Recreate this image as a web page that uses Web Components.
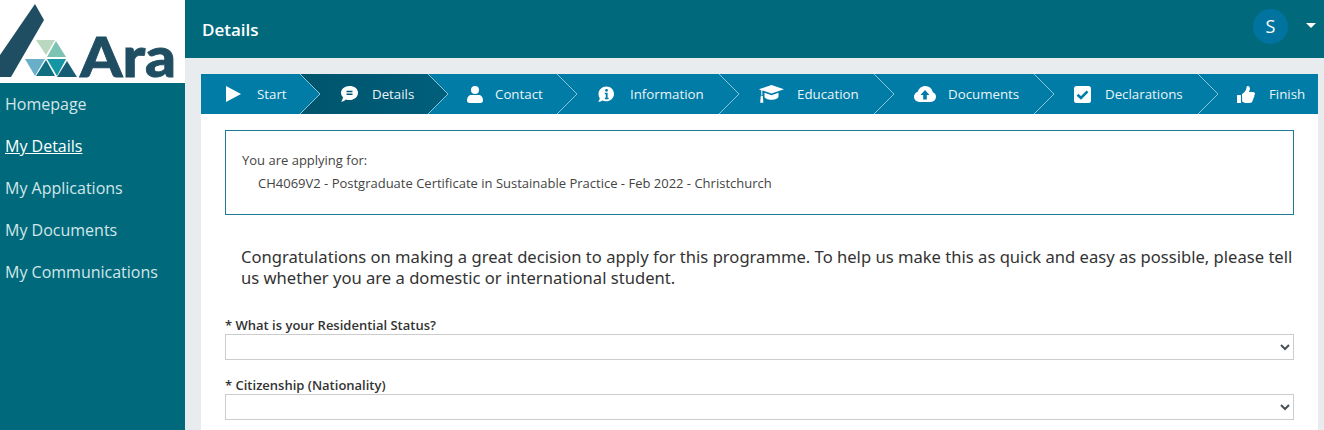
<!DOCTYPE html>
<html lang="en">
<head>
<meta charset="UTF-8">
<title>Details</title>
<style>
    html, body { margin: 0; height: 430px; overflow: hidden; background: #e9ecef; }
    body { font-family: "Open Sans", "Liberation Sans", sans-serif; }
</style>
</head>
<body>
<app-shell>
    <side-nav slot="side">
        <nav-link>Homepage</nav-link>
        <nav-link active>My Details</nav-link>
        <nav-link>My Applications</nav-link>
        <nav-link>My Documents</nav-link>
        <nav-link>My Communications</nav-link>
    </side-nav>
    <top-bar slot="top" heading="Details" initial="S"></top-bar>
    <step-bar slot="steps">
        <step-item w="99" pad="25" gap="16" icon="play">Start</step-item>
        <step-item w="128" pad="41" gap="14" icon="chat" active>Details</step-item>
        <step-item w="129" pad="39" gap="12" icon="user">Contact</step-item>
        <step-item w="162" pad="41" gap="15" icon="info">Information</step-item>
        <step-item w="155" pad="40" gap="13" icon="cap">Education</step-item>
        <step-item w="160" pad="40" gap="12" icon="cloud">Documents</step-item>
        <step-item w="164" pad="40" gap="14" icon="check">Declarations</step-item>
        <step-item w="120" pad="39" gap="14" icon="thumb" last>Finish</step-item>
    </step-bar>
    <applying-box>CH4069V2 - Postgraduate Certificate in Sustainable Practice - Feb 2022 - Christchurch</applying-box>
    <intro-text>Congratulations on making a great decision to apply for this programme. To help us make this as quick and easy as possible, please tell us whether you are a domestic or international student.</intro-text>
    <select-field label="* What is your Residential Status?"></select-field>
    <select-field label="* Citizenship (Nationality)"></select-field>
</app-shell>

<script>
    const icons = {
        play: '<svg width="15" height="16" viewBox="0 0 15 16"><path d="M0 0 L15 8 L0 16 Z" fill="#fff"/></svg>',
        chat: '<svg width="17" height="16" viewBox="0 0 17 16"><path d="M8.500 0C3.800 0 0 3 0 6.800c0 1.700.8 3.200 2 4.400-.2 1.500-.9 2.700-1.800 4.500 2-.3 3.600-1.100 4.800-2.200 1.100.4 2.300.6 3.500.6 4.700 0 8.500-3.100 8.500-7.300S13.200 0 8.500 0Z" fill="#fff"/><path d="M5.500 5.500h6M5.500 8.300h6" stroke="#00566f" stroke-width="1.500"/></svg>',
        user: '<svg width="16" height="17" viewBox="0 0 16 17"><circle cx="8" cy="4" r="4" fill="#fff"/><path d="M0 14.500c0-3.500 2-5.500 4.500-5.500h7c2.500 0 4.500 2 4.500 5.500 0 1.500-1 2.500-2.500 2.500h-11C1 17 0 16 0 14.500Z" fill="#fff"/></svg>',
        info: '<svg width="17" height="17" viewBox="0 0 17 17"><path d="M8.500 .5C4 .5.500 3.800.500 8c0 1.500.5 3 1.300 4.200-.2 1.200-.7 2.400-1.500 3.800 1.800-.2 3-.8 4-1.500 1.100.5 2.400.8 3.700.8 4.500 0 8-3.300 8-7.300S13 .5 8.500 .5Z" fill="#fff"/><circle cx="8.500" cy="4.300" r="1.400" fill="#007ca6"/><path d="M6.800 6.800h2.800v5h1v1.400H6.800v-1.400h1v-3.600h-1Z" fill="#007ca6"/></svg>',
        cap: '<svg width="25" height="18" viewBox="0 0 25 18"><path d="M12.500 0 25 4.300 12.500 8.600 3.800 5.600 3.300 6v4.600l-1 0V5.500L0 4.300Z" fill="#fff"/><path d="M5.500 7.700 12.500 10.200 19.500 7.700V11.500C19.500 13.200 16.500 14.700 12.500 14.700S5.500 13.200 5.500 11.500Z" fill="#fff"/><path d="M1.800 11h2l.6 6.800H1.200Z" fill="#fff"/></svg>',
        cloud: '<svg width="22" height="16" viewBox="0 0 22 16"><path d="M5.500 16C2.500 16 0 13.700 0 10.800c0-2.300 1.500-4.300 3.700-5C4.800 2.300 7.800 0 11.300 0c3.800 0 7 2.800 7.500 6.300 2.100.8 3.200 2.500 3.200 4.500 0 2.900-2.400 5.200-5.400 5.200Z" fill="#fff"/><path d="M11 4 15.500 9H12.800V13.500H9.200V9H6.500Z" fill="#007ca6"/></svg>',
        check: '<svg width="17" height="17" viewBox="0 0 17 17"><rect width="17" height="17" rx="2.500" fill="#fff"/><path d="M3.500 8.700 7 12 13.500 5.300" fill="none" stroke="#007ca6" stroke-width="2.600"/></svg>',
        thumb: '<svg width="18" height="17" viewBox="0 0 18 17"><rect y="9" width="4" height="8" rx=".5" fill="#fff"/><path d="M5 8C7 7 9.500 4 9.500 1.500 9.500.5 10.300 0 11 0c1.500 0 2.200 2 1.900 3.300-.1.900-.6 1.700-.9 2.700h4c1.100 0 2 .8 2 1.800 0 .6-.3 1.100-.7 1.500.2 1.200-.1 1.900-.7 2.400.1 1-.2 1.800-.9 2.300 0 1.700-1 3-3.300 3h-2.500c-1.700 0-3.100-.6-4.700-1.300Z" fill="#fff"/></svg>'
    };

    class AppShell extends HTMLElement {
        constructor() {
            super()
            this.attachShadow({mode: 'open'})
            this.shadowRoot.innerHTML = `<style>
                :host { display: grid; grid-template-columns: 185px 1fr; height: 430px; color: #333; }
                .side { grid-row: 1; background: #006a7c; display: flex; flex-direction: column; }
                .logo { height: 83px; background: #fff; }
                .logo svg { display: block; overflow: visible; }
                .right { display: flex; flex-direction: column; min-width: 0; }
                .steps { padding: 16px 6px 0 16px; }
                .sheet { background: #fff; margin: 0 6px 0 16px; padding: 16px 24px 0; flex: 1; }
            </style>
            <div class="side">
                <div class="logo">
                    <svg width="185" height="83" viewBox="0 0 185 83">
                        <path d="M35 4 44 20 11 77H0V55Z" fill="#1f4e63"/>
                        <path d="M36 40H55L46 55Z" fill="#b9d8bf"/>
                        <path d="M47 57 56 41 66 57Z" fill="#7cc3b3"/>
                        <path d="M25 59H45L35 76Z" fill="#6aafc9"/>
                        <path d="M36 76 46 60 55 76Z" fill="#0f6f80"/>
                        <path d="M47 59H66L57 76Z" fill="#1596a4"/>
                        <path d="M57 77 67 61 77 77Z" fill="#175e74"/>
                        <text x="80" y="77" font-family="Lato, 'Liberation Sans', sans-serif" font-weight="900" font-size="55" fill="#1f4e63" stroke="#1f4e63" stroke-width=".8" textLength="96" lengthAdjust="spacingAndGlyphs">Ara</text>
                    </svg>
                </div>
                <slot name="side"></slot>
            </div>
            <div class="right">
                <slot name="top"></slot>
                <div class="steps"><slot name="steps"></slot></div>
                <div class="sheet"><slot></slot></div>
            </div>`
        }
    }

    class SideNav extends HTMLElement {
        constructor() {
            super()
            this.attachShadow({mode: 'open'})
            this.shadowRoot.innerHTML = `<style>
                :host { display: flex; flex-direction: column; padding-top: 0; }
            </style><slot></slot>`
        }
    }

    class NavLink extends HTMLElement {
        constructor() {
            super()
            this.attachShadow({mode: 'open'})
            this.shadowRoot.innerHTML = `<style>
                :host { display: block; height: 42px; line-height: 42px; padding-left: 5px; font-size: 16px; color: #d3e6e9; }
                :host([active]) { color: #fff; text-decoration: underline; }
            </style><slot></slot>`
        }
    }

    class TopBar extends HTMLElement {
        constructor() {
            super()
            this.attachShadow({mode: 'open'})
            this.shadowRoot.innerHTML = `<style>
                :host { display: flex; align-items: center; height: 58px; background: #006a7c; color: #fff; padding: 0 8px 0 17px; }
                h1 { margin: 0; font-size: 17px; font-weight: 600; flex: 1; }
                .avatar { width: 35px; height: 35px; border-radius: 50%; background: #00739f; display: flex; align-items: center; justify-content: center; font-size: 18px; margin-top: -6px; }
                .caret { width: 0; height: 0; margin: -8px 0 0 18px; border: 5px solid transparent; border-top: 5px solid #fff; border-bottom: 0; }
            </style>
            <h1>${this.getAttribute('heading')}</h1>
            <div class="avatar">${this.getAttribute('initial')}</div>
            <div class="caret"></div>`
        }
    }

    class StepBar extends HTMLElement {
        constructor() {
            super()
            this.attachShadow({mode: 'open'})
            this.shadowRoot.innerHTML = `<style>
                :host { display: flex; height: 40px; background: #007ca6; }
            </style><slot></slot>`
        }
    }

    class StepItem extends HTMLElement {
        constructor() {
            super()
            this.attachShadow({mode: 'open'})
            const icon = icons[this.getAttribute('icon')]
            const last = this.hasAttribute('last')
            this.shadowRoot.innerHTML = `<style>
                :host { display: flex; align-items: center; position: relative; flex: none; box-sizing: border-box; height: 40px; color: #eaf4f8; font-size: 13.3px;
                    width: ${this.getAttribute('w')}px; padding-left: ${this.getAttribute('pad')}px; }
                .fill { position: absolute; left: 0; top: 0; width: 148px; height: 40px; background: linear-gradient(90deg, #00546c, #005f7c); clip-path: polygon(0 0, 128px 0, 148px 20px, 128px 40px, 0 40px, 20px 20px); }
                .icon, .label { position: relative; }
                .icon { display: flex; margin-right: ${this.getAttribute('gap')}px; }
                .label { white-space: nowrap; }
                .chev { position: absolute; left: 100%; top: 0; z-index: 2; }
            </style>
            ${this.hasAttribute('active') ? '<div class="fill"></div>' : ''}
            <span class="icon">${icon}</span><span class="label"><slot></slot></span>
            ${last ? '' : '<svg class="chev" width="20" height="40" viewBox="0 0 20 40"><path d="M0 0 20 20 0 40" fill="none" stroke="#8cc4d8" stroke-width="1"/></svg>'}`
        }
    }

    class ApplyingBox extends HTMLElement {
        constructor() {
            super()
            this.attachShadow({mode: 'open'})
            this.shadowRoot.innerHTML = `<style>
                :host { display: block; box-sizing: border-box; height: 85px; border: 1px solid #1d7a90; padding: 18px 16px 0; font-size: 13px; line-height: 23px; color: #444; }
                div { padding-left: 16px; }
            </style>
            You are applying for:
            <div><slot></slot></div>`
        }
    }

    class IntroText extends HTMLElement {
        constructor() {
            super()
            this.attachShadow({mode: 'open'})
            this.shadowRoot.innerHTML = `<style>
                :host { display: block; padding: 31px 0 0 16px; font-family: "Noto Sans", "Open Sans", sans-serif; font-size: 16.6px; line-height: 21px; color: #333; height: 71px; box-sizing: content-box; }
            </style><slot></slot>`
        }
    }

    class SelectField extends HTMLElement {
        constructor() {
            super()
            this.attachShadow({mode: 'open'})
            this.shadowRoot.innerHTML = `<style>
                :host { display: block; height: 60px; }
                label { display: block; font-size: 13px; font-weight: 600; line-height: 17px; color: #333; }
                select { display: block; width: 100%; height: 26px; box-sizing: border-box; border: 1px solid #ccc; background: #fff; border-radius: 0; color: #495057; font: 12px "Open Sans", sans-serif; }
            </style>
            <label>${this.getAttribute('label')}</label>
            <select><option></option></select>`
        }
    }

    customElements.define('app-shell', AppShell)
    customElements.define('side-nav', SideNav)
    customElements.define('nav-link', NavLink)
    customElements.define('top-bar', TopBar)
    customElements.define('step-bar', StepBar)
    customElements.define('step-item', StepItem)
    customElements.define('applying-box', ApplyingBox)
    customElements.define('intro-text', IntroText)
    customElements.define('select-field', SelectField)
</script>
</body>
</html>
